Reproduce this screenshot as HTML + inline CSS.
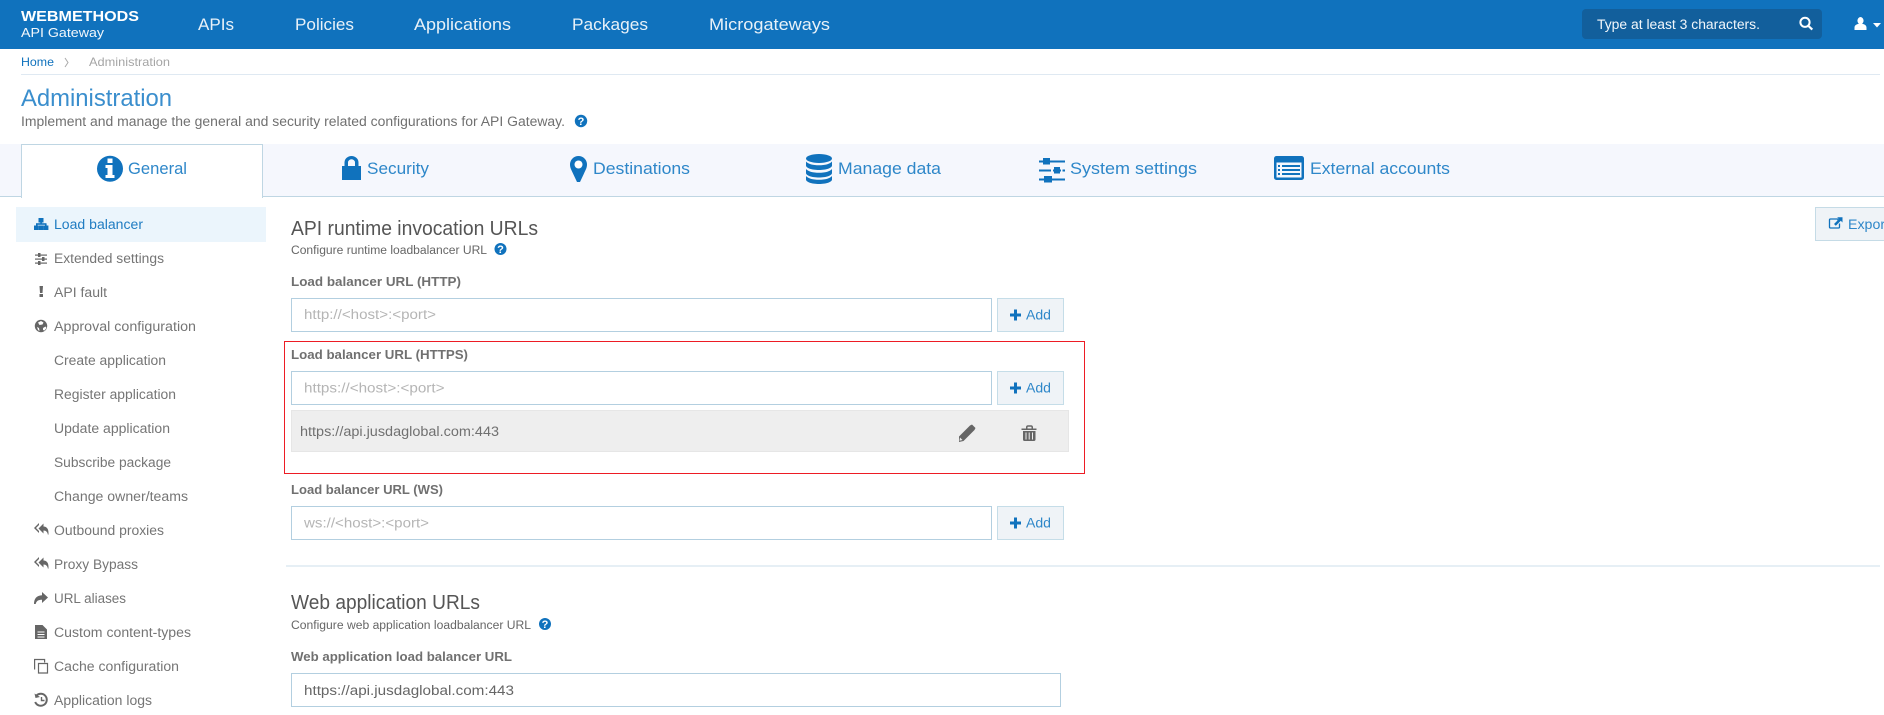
<!DOCTYPE html>
<html lang="en"><head><meta charset="utf-8"><title>Administration - API Gateway</title>
<style>
html,body{margin:0;padding:0;background:#fff;width:1884px;height:715px;overflow:hidden}
svg{display:block}
text{font-family:"Liberation Sans",sans-serif}
.nav{font-size:17px;fill:#e8f1f8}
.tab{font-size:17px;fill:#2e87c9}
.side{font-size:13.5px;fill:#757575}
.h{font-size:20px;fill:#555}
.sub{font-size:11.5px;fill:#666}
.lab{font-size:13px;fill:#707070;font-weight:bold}
.ph{font-size:13.5px;fill:#b5b5b5}
.add{font-size:13.5px;fill:#2e87c9}
.val{font-size:13.5px;fill:#707070}
.help{font-size:11px;font-weight:bold;fill:#fff;text-anchor:middle}
</style></head><body>
<svg width="1884" height="715" viewBox="0 0 1884 715" xmlns="http://www.w3.org/2000/svg">
<rect width="1884" height="715" fill="#fff"/>
<!-- header -->
<rect width="1884" height="49" fill="#1072bd"/>
<text x="21" y="21" font-size="14.5" font-weight="bold" fill="#fff" textLength="118" lengthAdjust="spacingAndGlyphs">WEBMETHODS</text>
<text x="21" y="37" font-size="13" fill="#f2f7fb" textLength="83" lengthAdjust="spacingAndGlyphs">API Gateway</text>
<text class="nav" x="198" y="30" textLength="36" lengthAdjust="spacingAndGlyphs">APIs</text>
<text class="nav" x="295" y="30" textLength="59" lengthAdjust="spacingAndGlyphs">Policies</text>
<text class="nav" x="414" y="30" textLength="97" lengthAdjust="spacingAndGlyphs">Applications</text>
<text class="nav" x="572" y="30" textLength="76" lengthAdjust="spacingAndGlyphs">Packages</text>
<text class="nav" x="709" y="30" textLength="121" lengthAdjust="spacingAndGlyphs">Microgateways</text>
<rect x="1582" y="9" width="240" height="30" rx="4" fill="#125f9c"/>
<text x="1597" y="29" font-size="13.5" fill="#f2f7fb" textLength="163" lengthAdjust="spacingAndGlyphs">Type at least 3 characters.</text>
<circle cx="1805" cy="22.3" r="4.6" fill="none" stroke="#fff" stroke-width="2"/>
<path d="M1808.5 26l3.8 3.6" stroke="#fff" stroke-width="2.2" fill="none"/>
<path d="M1860.5 17a3.2 3.8 0 0 1 3 4.4c-.3 1.2-1 2-1.4 2.4 2.5.5 4.4 1.6 4.4 3.8V30h-12v-2.4c0-2.2 1.9-3.3 4.4-3.800-.5-.4-1.100-1.200-1.400-2.400a3.200 3.800 0 0 1 3-4.400z" fill="#fff"/>
<path d="M1873 23h8l-4 4.5z" fill="#fff"/>
<!-- breadcrumb -->
<text x="21" y="66" font-size="12" fill="#1072bd" textLength="33" lengthAdjust="spacingAndGlyphs">Home</text>
<path d="M65 58l3 4.5-3 4.5" fill="none" stroke="#aaa" stroke-width="1"/>
<text x="89" y="66" font-size="12" fill="#a5a5a5" textLength="81" lengthAdjust="spacingAndGlyphs">Administration</text>
<rect x="21" y="74" width="1859" height="1" fill="#dfe9f2"/>
<!-- title -->
<text x="21" y="106" font-size="24" fill="#3a8ecd" textLength="151" lengthAdjust="spacingAndGlyphs">Administration</text>
<text x="21" y="126" font-size="13.5" fill="#707070" textLength="544" lengthAdjust="spacingAndGlyphs">Implement and manage the general and security related configurations for API Gateway.</text>
<circle cx="581" cy="121" r="6.2" fill="#1072bd"/><text class="help" x="581" y="125">?</text>
<!-- tabs -->
<rect x="0" y="144" width="1884" height="53" fill="#f5f7fd"/>
<rect x="0" y="196" width="1884" height="1" fill="#bfd6e3"/>
<rect x="21" y="144" width="242" height="54" fill="#fff"/>
<path d="M21.5 198V144.500H262.500V198" fill="none" stroke="#bfd6e3"/>
<circle cx="110" cy="168.700" r="13" fill="#1072bd"/>
<rect x="107.500" y="158.500" width="5" height="4.500" fill="#fff"/>
<path d="M105.500 165h7v10h2v3h-9v-3h2v-7h-2z" fill="#fff"/>
<text class="tab" x="128" y="174" textLength="59" lengthAdjust="spacingAndGlyphs">General</text>
<path d="M342 166h2.500v-3.500a7 6.500 0 0 1 14 0V166h2.500v14h-19zM348 166h7v-3.500a3.500 3.200 0 0 0-7 0z" fill="#1072bd" fill-rule="evenodd"/>
<text class="tab" x="367" y="174" textLength="62" lengthAdjust="spacingAndGlyphs">Security</text>
<path d="M578.500 156a8.500 8.500 0 0 1 8.500 8.500c0 3.500-1.500 5.500-3 9l-4 8.500h-3l-4-8.500c-1.500-3.500-3-5.500-3-9a8.500 8.500 0 0 1 8.500-8.500z" fill="#1072bd"/>
<circle cx="578.500" cy="164.500" r="4" fill="#fff"/>
<text class="tab" x="593" y="174" textLength="97" lengthAdjust="spacingAndGlyphs">Destinations</text>
<g fill="#1072bd">
<ellipse cx="819" cy="158.500" rx="13" ry="4.500"/>
<path d="M806 161.500c2 2.500 7 3.800 13 3.800s11-1.300 13-3.800v4c0 2.500-5.800 4.500-13 4.500s-13-2-13-4.500z"/>
<path d="M806 169c2 2.500 7 3.800 13 3.800s11-1.300 13-3.800v4c0 2.500-5.800 4.500-13 4.500s-13-2-13-4.500z"/>
<path d="M806 176c2 2.500 7 3.800 13 3.800s11-1.300 13-3.800v3.500c0 2.500-5.800 4.500-13 4.500s-13-2-13-4.500z"/>
</g>
<text class="tab" x="838" y="174" textLength="103" lengthAdjust="spacingAndGlyphs">Manage data</text>
<g fill="#1072bd">
<rect x="1039" y="160.500" width="26" height="2"/><rect x="1043" y="158" width="7" height="6.500"/>
<rect x="1039" y="169.500" width="26" height="2"/><rect x="1054" y="167" width="6" height="6.500"/>
<rect x="1039" y="178.500" width="26" height="2"/><rect x="1044" y="176" width="8" height="6.500"/>
</g>
<rect x="1051" y="169" width="2" height="3" fill="#f5f7fd"/><rect x="1061" y="169" width="1.500" height="3" fill="#f5f7fd"/>
<text class="tab" x="1070" y="174" textLength="127" lengthAdjust="spacingAndGlyphs">System settings</text>
<rect x="1274" y="156" width="30" height="24" rx="2.500" fill="#1072bd"/>
<rect x="1276.500" y="162.500" width="25" height="15" fill="#f5f7fd"/>
<g fill="#1072bd"><rect x="1278" y="165" width="2" height="2"/><rect x="1282" y="165" width="18" height="2"/><rect x="1278" y="169" width="2" height="2"/><rect x="1282" y="169" width="18" height="2"/><rect x="1278" y="173" width="2" height="2"/><rect x="1282" y="173" width="18" height="2"/></g>
<text class="tab" x="1310" y="174" textLength="140" lengthAdjust="spacingAndGlyphs">External accounts</text>
<!-- export -->
<rect x="1815.500" y="207.500" width="80" height="33" fill="#eff3f7" stroke="#c5dbe6"/>
<path d="M1838 220.500v-1.500h-7.500a1 1 0 0 0-1 1v7a1 1 0 0 0 1 1h8a1 1 0 0 0 1-1v-3.500" fill="none" stroke="#1072bd" stroke-width="1.300"/>
<path d="M1834 224l5-5-1.800-1.800h5.300v5.300l-1.700-1.700-5 5z" fill="#1072bd"/>
<text x="1848" y="229" font-size="14" fill="#2e87c9" textLength="41" lengthAdjust="spacingAndGlyphs">Export</text>
<!-- sidebar -->
<rect x="16" y="207" width="250" height="35" fill="#ebf5fc"/>
<g fill="#1072bd"><rect x="38.500" y="218" width="5" height="4.500"/><rect x="40.300" y="222" width="1.600" height="2"/><rect x="36" y="223.200" width="10.500" height="1.600"/><rect x="36" y="224" width="1.600" height="2"/><rect x="45" y="224" width="1.600" height="2"/><rect x="34" y="225.500" width="4.800" height="4.500"/><rect x="38.800" y="225.500" width="4.800" height="4.500"/><rect x="43.600" y="225.500" width="4.800" height="4.500"/></g>
<g fill="#666">
<rect x="35" y="254.500" width="12" height="1.200"/><rect x="38" y="253" width="2.500" height="4"/>
<rect x="35" y="258.500" width="12" height="1.200"/><rect x="42" y="257" width="2.500" height="4"/>
<rect x="35" y="262.500" width="12" height="1.200"/><rect x="38" y="261" width="2.500" height="4"/>
<path d="M39.500 286h3.500l-.5 7h-2.500zM39.500 294h3.500v3h-3.500z"/>
<circle cx="41" cy="326" r="6.200"/>
</g>
<path d="M38 322.500l3-1.500 2.500 1.500-1 2-3 .5zM43 328l2.500-1.500 1 1.500-2 2.500-1.500-.5zM37 327l2 1 .5 3-1.500-1z" fill="#fff"/>
<path fill="#666" d="M39 523v2l-3 3 3 3v2l-5-5zM43.500 523.500v3c3.500.2 5 2.500 5 6.500 0 1 0 1.500-.5 2-.5-3-2-4.500-4.500-4.500v3l-5-5z"/>
<path fill="#666" transform="translate(0 34)" d="M39 523v2l-3 3 3 3v2l-5-5zM43.500 523.500v3c3.500.2 5 2.500 5 6.500 0 1 0 1.500-.5 2-.5-3-2-4.500-4.500-4.500v3l-5-5z"/>
<path fill="#666" d="M42 592l6 5.500-6 5.500v-3.300c-3.500 0-5.600 1-6.300 4.300h-1.700c0-5 2.500-8.500 8-8.700z"/>
<path fill="#666" fill-rule="evenodd" d="M35 625h7.500l4.500 4.500V639H35zM37.500 631.500v1h7v-1zM37.500 634v1h7v-1zM37.500 636.500v1h7v-1z"/>
<path fill="none" stroke="#666" stroke-width="1.200" d="M34.600 669.500v-10h10v3M38.500 663.500h9v9.500h-9z"/>
<path fill="none" stroke="#666" stroke-width="2" d="M36.500 695.500a6 6 0 1 1-1.300 6.500"/><path fill="#666" d="M34.500 693.500l1 4.500 4.500-1z"/><path fill="none" stroke="#666" stroke-width="1.400" d="M41.500 697v3.500h3"/>
<text class="side" x="54" y="229" style="fill:#1f7cc2" textLength="89" lengthAdjust="spacingAndGlyphs">Load balancer</text>
<text class="side" x="54" y="263" textLength="110" lengthAdjust="spacingAndGlyphs">Extended settings</text>
<text class="side" x="54" y="297" textLength="53" lengthAdjust="spacingAndGlyphs">API fault</text>
<text class="side" x="54" y="331" textLength="142" lengthAdjust="spacingAndGlyphs">Approval configuration</text>
<text class="side" x="54" y="365" textLength="112" lengthAdjust="spacingAndGlyphs">Create application</text>
<text class="side" x="54" y="399" textLength="122" lengthAdjust="spacingAndGlyphs">Register application</text>
<text class="side" x="54" y="433" textLength="116" lengthAdjust="spacingAndGlyphs">Update application</text>
<text class="side" x="54" y="467" textLength="117" lengthAdjust="spacingAndGlyphs">Subscribe package</text>
<text class="side" x="54" y="501" textLength="134" lengthAdjust="spacingAndGlyphs">Change owner/teams</text>
<text class="side" x="54" y="535" textLength="110" lengthAdjust="spacingAndGlyphs">Outbound proxies</text>
<text class="side" x="54" y="569" textLength="84" lengthAdjust="spacingAndGlyphs">Proxy Bypass</text>
<text class="side" x="54" y="603" textLength="72" lengthAdjust="spacingAndGlyphs">URL aliases</text>
<text class="side" x="54" y="637" textLength="137" lengthAdjust="spacingAndGlyphs">Custom content-types</text>
<text class="side" x="54" y="671" textLength="125" lengthAdjust="spacingAndGlyphs">Cache configuration</text>
<text class="side" x="54" y="705" textLength="98" lengthAdjust="spacingAndGlyphs">Application logs</text>
<!-- content -->
<text class="h" x="291" y="235" textLength="247" lengthAdjust="spacingAndGlyphs">API runtime invocation URLs</text>
<text class="sub" x="291" y="254" textLength="196" lengthAdjust="spacingAndGlyphs">Configure runtime loadbalancer URL</text>
<circle cx="500.500" cy="249" r="6" fill="#1072bd"/><text class="help" x="500.500" y="253">?</text>
<text class="lab" x="291" y="286" textLength="170" lengthAdjust="spacingAndGlyphs">Load balancer URL (HTTP)</text>
<rect x="291.500" y="298.500" width="700" height="33" fill="#fff" stroke="#b3cfe0"/>
<text class="ph" x="304" y="319" textLength="132" lengthAdjust="spacingAndGlyphs">http://&lt;host&gt;:&lt;port&gt;</text>
<rect x="997.500" y="298.500" width="66" height="33" fill="#eff3f7" stroke="#c5dde8"/>
<path d="M1014 309.500h3v4h4v3h-4v4h-3v-4h-4v-3h4z" fill="#1072bd"/>
<text class="add" x="1026" y="319.500" textLength="25" lengthAdjust="spacingAndGlyphs">Add</text>
<rect x="284.500" y="341.500" width="800" height="132" fill="none" stroke="#ed1c24"/>
<text class="lab" x="291" y="359" textLength="177" lengthAdjust="spacingAndGlyphs">Load balancer URL (HTTPS)</text>
<rect x="291.500" y="371.500" width="700" height="33" fill="#fff" stroke="#b3cfe0"/>
<text class="ph" x="304" y="392.500" textLength="140.500" lengthAdjust="spacingAndGlyphs">https://&lt;host&gt;:&lt;port&gt;</text>
<rect x="997.500" y="371.500" width="66" height="33" fill="#eff3f7" stroke="#c5dde8"/>
<path d="M1014 382.500h3v4h4v3h-4v4h-3v-4h-4v-3h4z" fill="#1072bd"/>
<text class="add" x="1026" y="392.500" textLength="25" lengthAdjust="spacingAndGlyphs">Add</text>
<rect x="291.500" y="410.500" width="777" height="41" fill="#eee" stroke="#e6e6e6"/>
<text class="val" x="300" y="436" textLength="199" lengthAdjust="spacingAndGlyphs">https://api.jusdaglobal.com:443</text>
<path d="M959 436.500l11-11 2-1 3.500 3.500-1 2-11 11-4.500 1z" fill="#666"/><path d="M960 437.500l2.500 2.500-3 .7z" fill="#eee"/>
<path d="M1021.500 428.500h4.500v-1.300c0-1.200.8-2 2-2h3c1.200 0 2 .8 2 2v1.300h3.500v1.500h-15zM1027.500 428.500h4v-1.200c0-.4-.2-.6-.6-.6h-2.800c-.4 0-.6.2-.6.600zM1023 431h12.500v8.500c0 .9-.6 1.500-1.500 1.500h-9.500c-.9 0-1.500-.6-1.500-1.500z" fill="#666" fill-rule="evenodd"/>
<path d="M1026 432.500v7M1029.200 432.500v7M1032.500 432.500v7" stroke="#eee" stroke-width="1"/>
<text class="lab" x="291" y="494" textLength="152" lengthAdjust="spacingAndGlyphs">Load balancer URL (WS)</text>
<rect x="291.500" y="506.500" width="700" height="33" fill="#fff" stroke="#b3cfe0"/>
<text class="ph" x="304" y="527.500" textLength="125" lengthAdjust="spacingAndGlyphs">ws://&lt;host&gt;:&lt;port&gt;</text>
<rect x="997.500" y="506.500" width="66" height="33" fill="#eff3f7" stroke="#c5dde8"/>
<path d="M1014 517.500h3v4h4v3h-4v4h-3v-4h-4v-3h4z" fill="#1072bd"/>
<text class="add" x="1026" y="527.500" textLength="25" lengthAdjust="spacingAndGlyphs">Add</text>
<rect x="286" y="565" width="1594" height="2" fill="#e6eff5"/>
<text class="h" x="291" y="609" textLength="189" lengthAdjust="spacingAndGlyphs">Web application URLs</text>
<text class="sub" x="291" y="629" textLength="240" lengthAdjust="spacingAndGlyphs">Configure web application loadbalancer URL</text>
<circle cx="545" cy="624" r="6" fill="#1072bd"/><text class="help" x="545" y="628">?</text>
<text class="lab" x="291" y="661" textLength="221" lengthAdjust="spacingAndGlyphs">Web application load balancer URL</text>
<rect x="291.500" y="673.500" width="769" height="33" fill="#fff" stroke="#b3cfe0"/>
<text x="304" y="695" font-size="13.5" fill="#666" textLength="210" lengthAdjust="spacingAndGlyphs">https://api.jusdaglobal.com:443</text>
</svg>
</body></html>
